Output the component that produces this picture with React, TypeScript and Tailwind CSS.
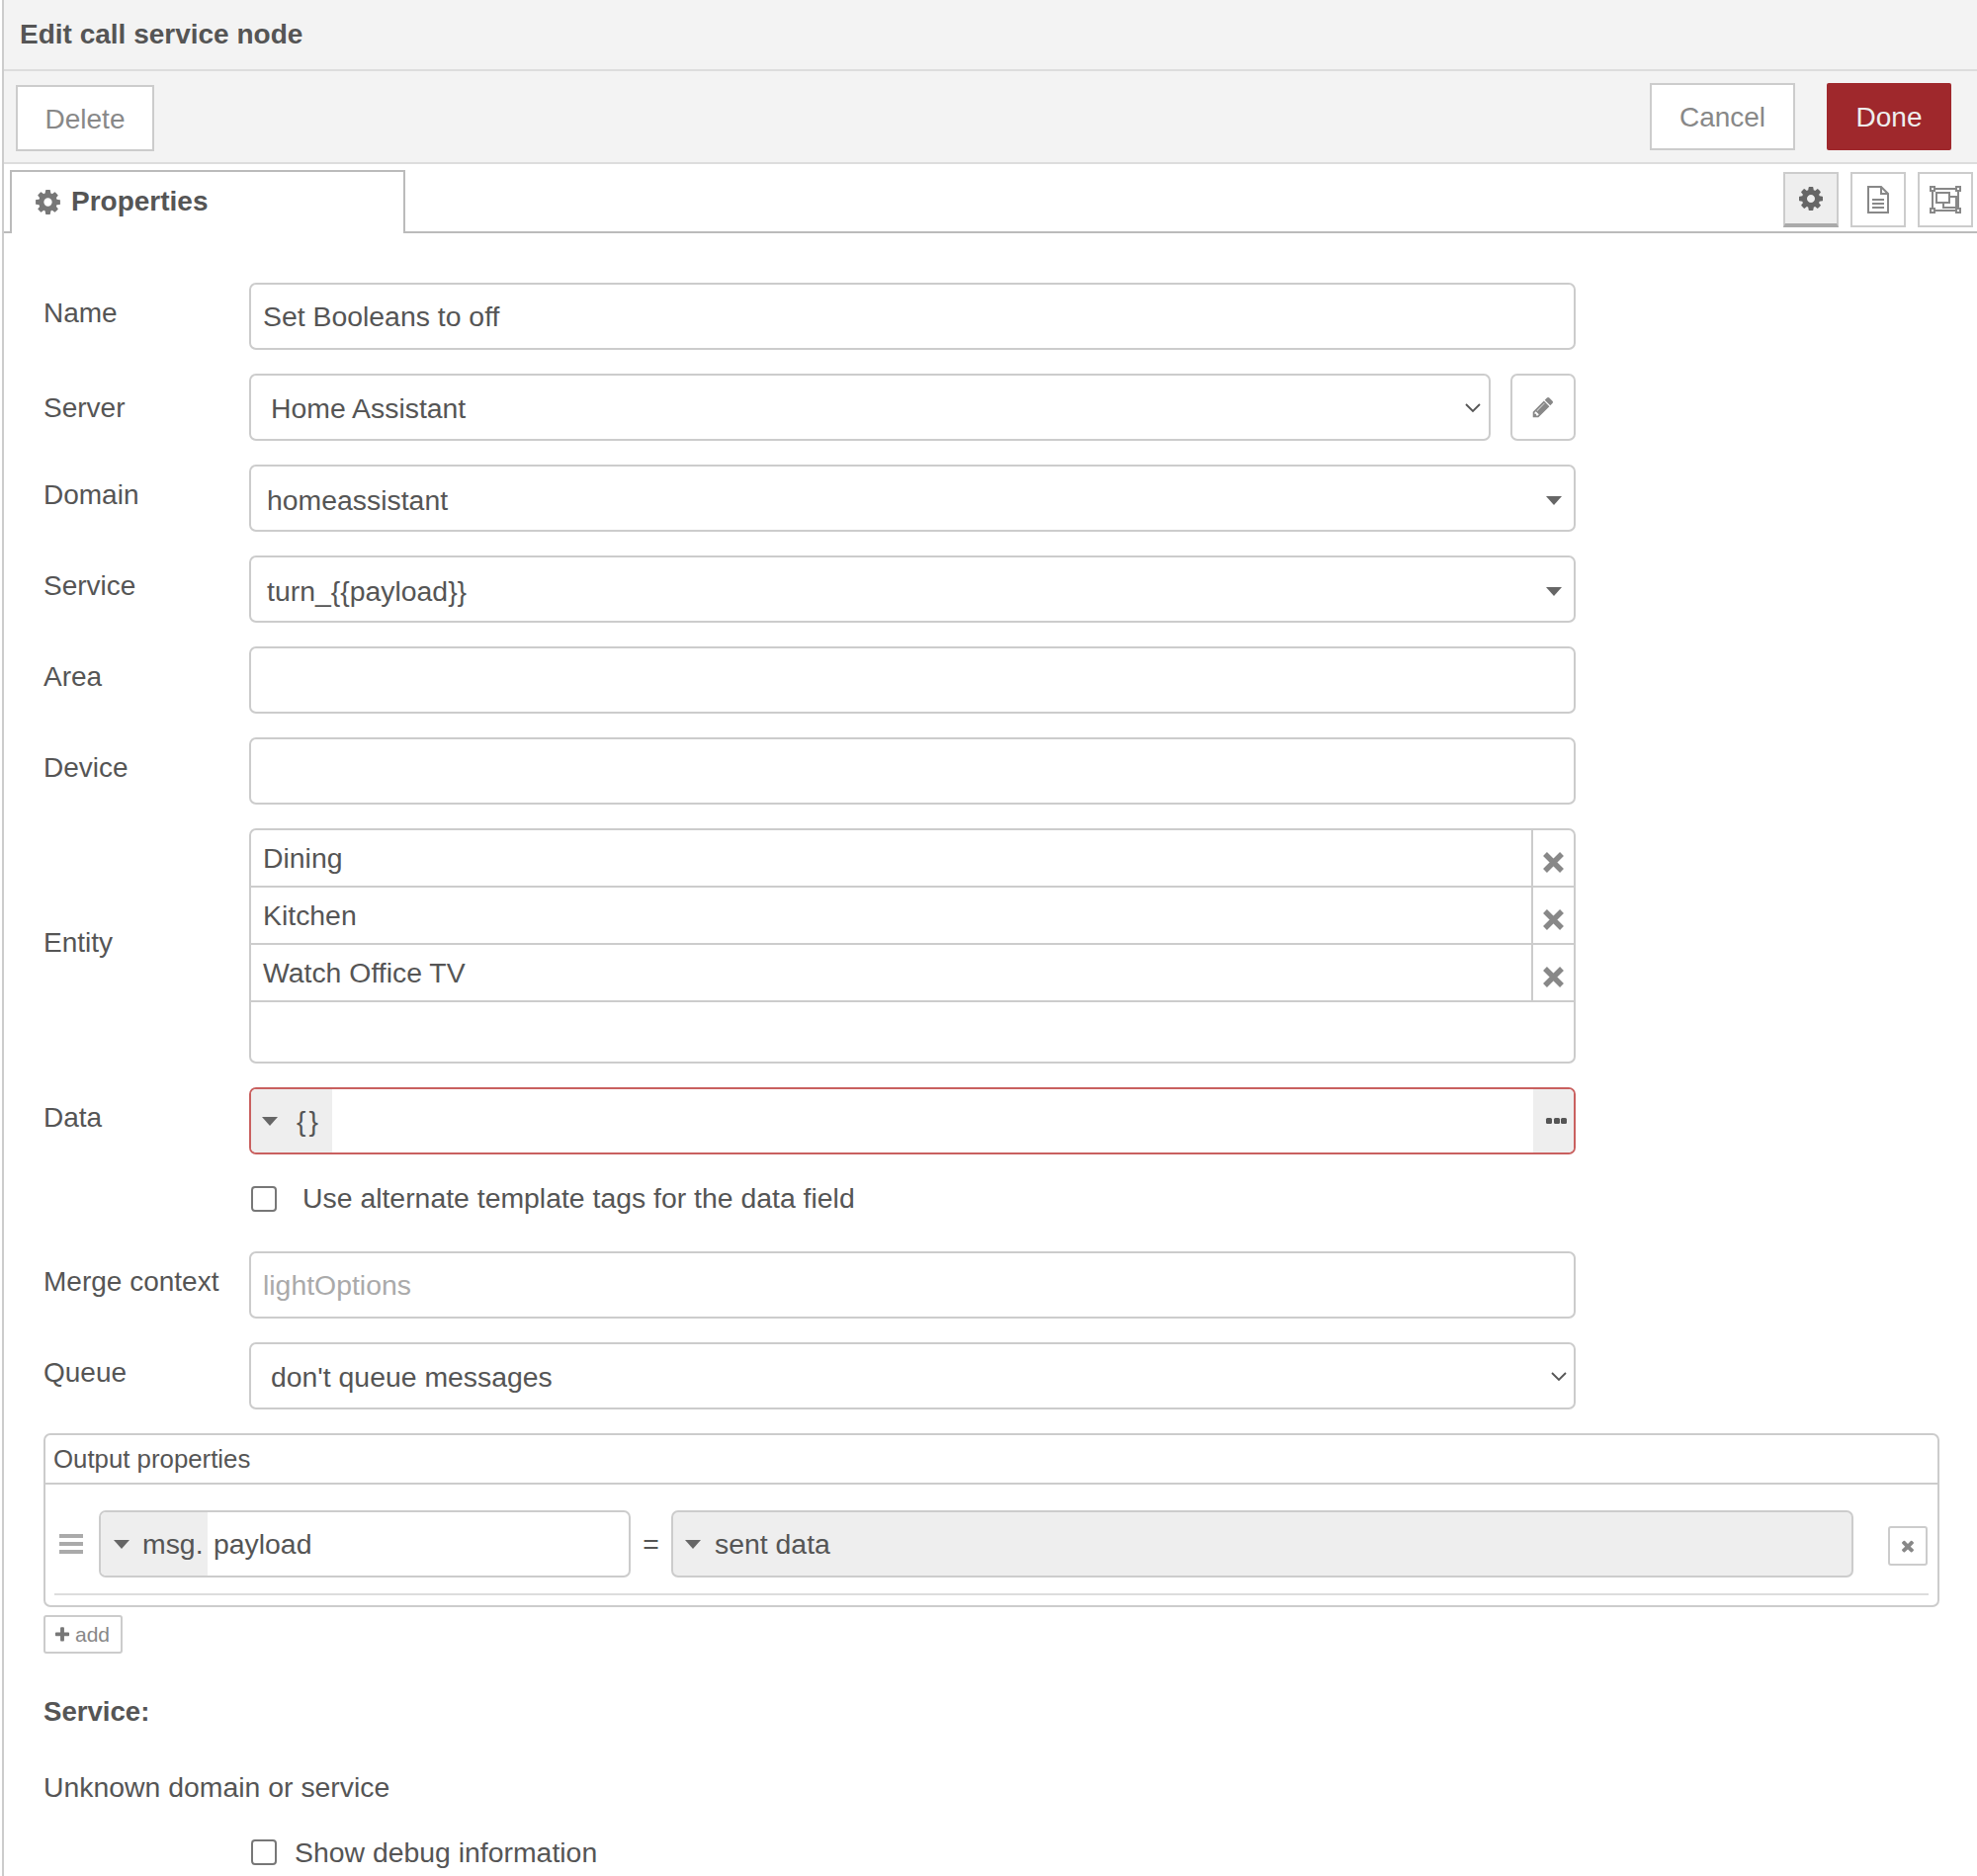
import type { ReactNode } from 'react';

const COG =
  'M1152 896q0-106-75-181t-181-75-181 75-75 181 75 181 181 75 181-75 75-181zm512-109v222q0 12-8 23t-20 13l-185 28q-19 54-39 91 35 50 107 138 10 12 10 25t-9 23q-27 37-99 108t-94 71q-12 0-26-9l-138-108q-44 23-91 38-16 136-29 186-7 28-36 28h-222q-14 0-24.5-8.5t-11.5-21.5l-28-184q-49-16-90-37l-141 107q-10 9-25 9-14 0-25-11-126-114-165-168-7-10-7-23 0-12 8-23 15-21 51-66.5t54-70.5q-27-50-41-99l-183-27q-13-2-21-12.5t-8-23.5v-222q0-12 8-23t19-13l186-28q14-46 39-92-40-57-107-138-10-12-10-24 0-10 9-23 26-36 98.5-107.5t94.5-71.5q13 0 26 10l138 107q44-23 91-38 16-136 29-186 7-28 36-28h222q14 0 24.5 8.5t11.5 21.5l28 184q49 16 90 37l142-107q9-9 24-9 13 0 25 10 129 119 165 170 7 8 7 22 0 12-8 23-15 21-51 66.5t-54 70.5q26 50 41 98l183 28q13 2 21 12.5t8 23.5z';
const PENCIL =
  'M491 1536l91-91-235-235-91 91v107h128v128h107zm523-928q0-22-22-22-10 0-17 7l-542 542q-7 7-7 17 0 22 22 22 10 0 17-7l542-542q7-7 7-17zm-54-192l416 416-832 832h-416v-416zm683 96q0 53-37 90l-166 166-416-416 166-165q36-38 90-38 53 0 91 38l235 234q37 39 37 91z';
const TIMES =
  'M1490 1322q0 40-28 68l-136 136q-28 28-68 28t-68-28l-294-294-294 294q-28 28-68 28t-68-28l-136-136q-28-28-28-68t28-68l294-294-294-294q-28-28-28-68t28-68l136-136q28-28 68-28t68 28l294 294 294-294q28-28 68-28t68 28l136 136q28 28 28 68t-28 68l-294 294 294 294q28 28 28 68z';
const PLUS =
  'M1600 736v192q0 40-28 68t-68 28h-416v416q0 40-28 68t-68 28h-192q-40 0-68-28t-28-68v-416h-416q-40 0-68-28t-28-68v-192q0-40 28-68t68-28h416v-416q0-40 28-68t68-28h192q40 0 68 28t28 68v416h416q40 0 68 28t28 68z';

function Fa({ d, className }: { d: string; className: string }) {
  return (
    <svg viewBox="0 0 1792 1792" className={className} fill="currentColor">
      <path d={d} />
    </svg>
  );
}

function Caret({ className = 'h-[9px] w-[16px]' }: { className?: string }) {
  return (
    <svg viewBox="0 0 16 9" className={className} fill="#666">
      <path d="M0 0h16L8 9z" />
    </svg>
  );
}

function Chevron() {
  return (
    <svg viewBox="0 0 16 10" className="h-[10px] w-[16px]" fill="none" stroke="#555" strokeWidth="1.8">
      <path d="M1 1l7 7 7-7" />
    </svg>
  );
}

function Row({ label, children, up = true }: { label: string; children: ReactNode; up?: boolean }) {
  return (
    <div className="flex items-center">
      <div className={`w-[208px] shrink-0 text-[28px] ${up ? 'pb-[6px]' : 'pt-[2px]'}`}>{label}</div>
      {children}
    </div>
  );
}

// border and background are passed in whole so they don't fight each other
function Box({
  children,
  className = '',
  tone = 'border-[#ccc] bg-white',
}: {
  children?: ReactNode;
  className?: string;
  tone?: string;
}) {
  return (
    <div className={`flex h-[68px] items-center rounded-[7px] border-2 ${tone} ${className}`}>{children}</div>
  );
}

function EntityRow({ name }: { name: string }) {
  return (
    <div className="flex h-[58px] border-b-2 border-[#ccc]">
      <div className="flex flex-1 items-center pl-[12px]">{name}</div>
      <div className="flex w-[43px] items-center justify-center border-l-2 border-[#ccc] pt-[8px]">
        <svg viewBox="0 0 21 21" className="h-[21px] w-[21px]" fill="none" stroke="#888" strokeWidth="5.5">
          <path d="M2 2l17 17M19 2L2 19" />
        </svg>
      </div>
    </div>
  );
}

export default function App() {
  return (
    <div className="h-[1898px] w-[2000px] overflow-hidden bg-white pl-[2px] font-['Liberation_Sans',Arial,sans-serif] text-[28.4px] text-[#555]">
      <div className="h-full border-l-2 border-[#ccc]">
        <div className="flex h-[72px] items-center border-b-2 border-[#ddd] bg-[#f3f3f3] pl-[16px] text-[28px] font-bold">
          Edit call service node
        </div>

        {/* toolbar */}
        <div className="flex h-[94px] items-start justify-between border-b-2 border-[#ddd] bg-[#f3f3f3] pl-[12px] pr-[26px] text-[28px] text-[#888]">
          <div className="mt-[14px] flex h-[67px] w-[140px] items-center justify-center border-2 border-[#ccc] bg-white pt-[2px]">
            Delete
          </div>
          <div className="mt-[12px] flex gap-[32px]">
            <div className="flex h-[68px] w-[147px] items-center justify-center border-2 border-[#ccc] bg-white pt-[2px]">
              Cancel
            </div>
            <div className="flex h-[68px] w-[126px] items-center justify-center rounded-[2px] bg-[#9f282c] pt-[2px] text-[#eee]">
              Done
            </div>
          </div>
        </div>

        {/* tabs */}
        <div className="flex h-[70px] items-start justify-between border-b-2 border-[#bbb] pl-[6px] pr-[4px]">
          <div className="mt-[6px] flex h-[64px] w-[400px] items-center border-x-2 border-t-2 border-[#bbb] bg-white pb-[2px] pl-[22px] text-[28px] font-bold">
            <Fa d={COG} className="mr-[9px] h-[29px] w-[29px] text-[#777]" />
            Properties
          </div>
          <div className="mt-[8px] flex gap-[12px]">
            <div className="flex h-[56px] w-[56px] items-center justify-center border-2 border-b-[4px] border-[#ccc] border-b-[#aaa] bg-[#eee] text-[#666]">
              <Fa d={COG} className="h-[28px] w-[28px]" />
            </div>
            <div className="flex h-[56px] w-[56px] items-center justify-center border-2 border-[#ccc]">
              <svg viewBox="0 0 24 28" className="h-[28px] w-[24px]" fill="none" stroke="#888" strokeWidth="2">
                <path d="M2 1h13l7 7v19H2zM15 1v7h7M6 14h12M6 18h12M6 22h12" />
              </svg>
            </div>
            <div className="flex h-[56px] w-[56px] items-center justify-center border-2 border-[#ccc]">
              <svg viewBox="0 0 32 28" className="h-[28px] w-[32px]" fill="none" stroke="#888" strokeWidth="2">
                <path d="M3 4v20M29 4v20M4 3h24M4 25h24M7 7h13v10H7zM14 17v5h13V11h-7" />
                <rect x="1" y="1" width="4" height="4" />
                <rect x="27" y="1" width="4" height="4" />
                <rect x="1" y="23" width="4" height="4" />
                <rect x="27" y="23" width="4" height="4" />
              </svg>
            </div>
          </div>
        </div>

        {/* form */}
        <div className="flex w-[1958px] flex-col pl-[40px] pt-[50px]">
          <div className="flex w-[1550px] flex-col gap-[24px]">
            <Row label="Name">
              <Box className="flex-1 pl-[12px]">Set Booleans to off</Box>
            </Row>
            <Row label="Server" up={false}>
              <Box className="w-[1256px] justify-between pl-[20px] pr-[8px] pt-[2px]">
                Home Assistant
                <Chevron />
              </Box>
              <Box className="ml-[20px] w-[66px] justify-center text-[#888]">
                <Fa d={PENCIL} className="h-[24px] w-[24px]" />
              </Box>
            </Row>
            <Row label="Domain">
              <Box className="flex-1 justify-between pl-[16px] pr-[12px] pt-[4px]">
                homeassistant
                <Caret />
              </Box>
            </Row>
            <Row label="Service">
              <Box className="flex-1 justify-between pl-[16px] pr-[12px] pt-[4px]">
                {'turn_{{payload}}'}
                <Caret />
              </Box>
            </Row>
            <Row label="Area">
              <Box className="flex-1" />
            </Row>
            <Row label="Device">
              <Box className="flex-1" />
            </Row>
            <Row label="Entity">
              <div className="h-[238px] flex-1 rounded-[7px] border-2 border-[#ccc]">
                <EntityRow name="Dining" />
                <EntityRow name="Kitchen" />
                <EntityRow name="Watch Office TV" />
              </div>
            </Row>
            <Row label="Data">
              <Box className="flex-1 justify-between overflow-hidden" tone="border-[#c9605f] bg-white">
                <div className="flex h-full w-[82px] items-center bg-[#eee] pl-[11px]">
                  <Caret />
                  <span className="ml-[19px] tracking-[3px]">{'{}'}</span>
                </div>
                <div className="flex h-full w-[41px] items-center justify-center gap-[1.5px] bg-[#eee] pl-[6px]">
                  <span className="h-[6px] w-[6px] rounded-[1.5px] bg-[#555]" />
                  <span className="h-[6px] w-[6px] rounded-[1.5px] bg-[#555]" />
                  <span className="h-[6px] w-[6px] rounded-[1.5px] bg-[#555]" />
                </div>
              </Box>
            </Row>
            <div className="flex h-[50px] items-start pl-[210px] pt-[8px]">
              <span className="h-[26px] w-[26px] rounded-[4px] border-2 border-[#777]" />
              <span className="ml-[26px] leading-[24px]">Use alternate template tags for the data field</span>
            </div>
            <Row label="Merge context">
              <Box className="flex-1 pl-[12px] text-[#aaa]">lightOptions</Box>
            </Row>
            <Row label="Queue">
              <Box className="flex-1 justify-between pl-[20px] pr-[7px] pt-[2px]">
                don't queue messages
                <Chevron />
              </Box>
            </Row>
          </div>

          {/* output properties */}
          <div className="mt-[24px] h-[176px] w-[1918px] rounded-[7px] border-2 border-[#ccc]">
            <div className="flex h-[50px] items-center border-b-2 border-[#ccc] pl-[8px] text-[25.8px]">
              Output properties
            </div>
            <div className="mx-[9px] flex h-[112px] items-start border-b-2 border-[#ddd] pt-[26px]">
              <div className="ml-[5px] mt-[24px] flex w-[24px] flex-col gap-[4px]">
                <span className="h-[4px] bg-[#aaa]" />
                <span className="h-[4px] bg-[#aaa]" />
                <span className="h-[4px] bg-[#aaa]" />
              </div>
              <Box className="ml-[16px] w-[538px] overflow-hidden">
                <div className="flex h-full w-[108px] items-center bg-[#eee] pl-[13px]">
                  <Caret />
                  <span className="ml-[13px]">msg.</span>
                </div>
                <span className="ml-[6px]">payload</span>
              </Box>
              <div className="flex h-[68px] w-[41px] items-center justify-center">=</div>
              <Box className="w-[1196px] pl-[12px]" tone="border-[#ccc] bg-[#eee]">
                <Caret />
                <span className="ml-[14px]">sent data</span>
              </Box>
              <div className="ml-[35px] mt-[16px] flex h-[40px] w-[40px] items-center justify-center rounded-[3px] border-2 border-[#ccc] text-[#888]">
                <Fa d={TIMES} className="h-[18px] w-[18px]" />
              </div>
            </div>
          </div>
          <div className="mt-[8px] flex h-[39px] w-[80px] items-center rounded-[3px] border-2 border-[#ccc] pl-[8px] text-[21px] text-[#888]">
            <Fa d={PLUS} className="mr-[4px] h-[18px] w-[18px] text-[#777]" />
            add
          </div>
          <div className="mt-[43px] text-[27.6px] font-bold leading-[32px]">Service:</div>
          <div className="mt-[44px] leading-[32px]">Unknown domain or service</div>
          <div className="mt-[37px] flex items-center pl-[210px]">
            <span className="h-[26px] w-[26px] rounded-[4px] border-2 border-[#777]" />
            <span className="ml-[18px] leading-[24px]">Show debug information</span>
          </div>
        </div>
      </div>
    </div>
  );
}
